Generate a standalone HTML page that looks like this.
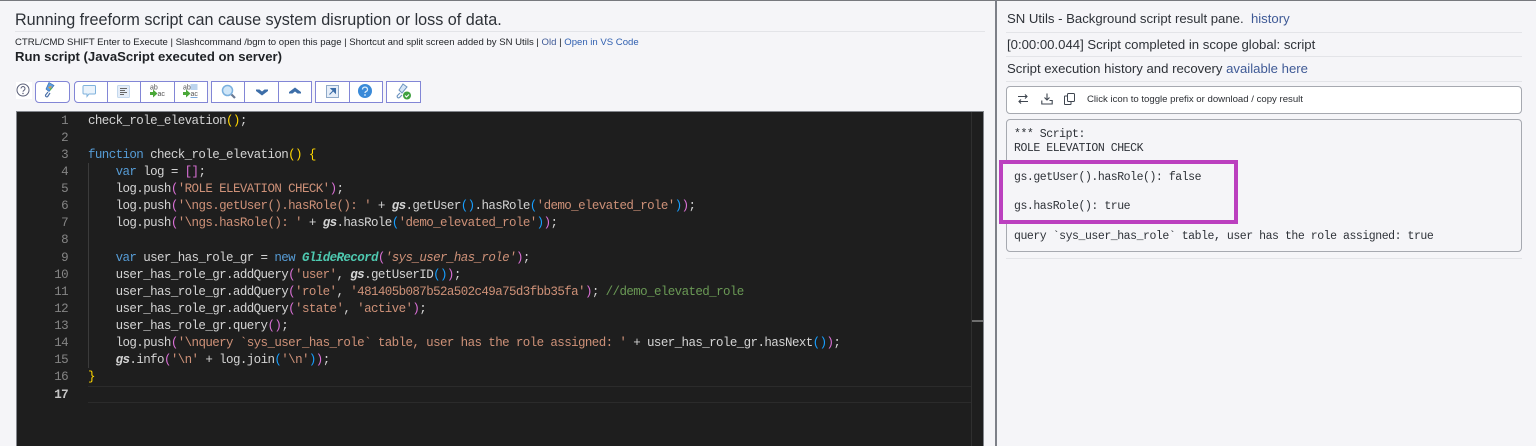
<!DOCTYPE html>
<html><head><meta charset="utf-8"><style>
html,body{margin:0;padding:0;width:1536px;height:446px;overflow:hidden;background:#f5f5f8;font-family:"Liberation Sans",sans-serif;color:#2e3238}
.a{position:absolute;white-space:pre}
a{color:#3f5a96;text-decoration:none}
.rule{position:absolute;height:1px;background:#e3e4e8}
.btn{position:absolute;top:81px;height:20px;background:#fff;border:1px solid #8286d6;box-sizing:content-box}
.d{position:absolute;top:81px;width:1px;height:22px;background:#8286d6}
svg{position:absolute;overflow:visible}
#ed{position:absolute;left:16px;top:111px;width:968px;height:335px;background:#1e1e1e;border-top:1px solid #83868c;border-left:1px solid #83868c;border-right:1px solid #83868c;box-sizing:border-box}
.l{position:absolute;left:88px;white-space:pre;font:12.5px/17px "Liberation Mono",monospace;letter-spacing:-.6px;color:#d4d4d4}
.n{position:absolute;left:30px;width:38px;text-align:right;font:12.5px/17px "Liberation Mono",monospace;letter-spacing:-.6px;color:#858585}
.k{color:#569cd6}.s{color:#ce9178}.c{color:#6a9955}.y{color:#ffd700}.p{color:#da70d6}.b{color:#179fff}
.g{font-style:italic;font-weight:bold}.t{color:#4ec9b0;font-style:italic;font-weight:bold}.si{color:#ce9178;font-style:italic}
.m{position:absolute;left:1014px;white-space:pre;font:11.5px/14px "Liberation Mono",monospace;letter-spacing:-.45px;color:#2e3238}
</style></head><body>
<div class="a" style="left:0;top:0;width:1536px;height:1px;background:#77797e"></div>
<div class="a" style="left:15px;top:10px;font-size:16.17px;line-height:20px;color:#2e3238">Running freeform script can cause system disruption or loss of data.</div>
<div class="rule" style="left:15px;top:31px;width:970px"></div>
<div class="a" style="left:15px;top:36px;font-size:9.57px;line-height:13px;color:#1f2226">CTRL/CMD SHIFT Enter to Execute | Slashcommand /bgm to open this page | Shortcut and split screen added by SN Utils | <a href="#">Old</a> | <a href="#" style="color:#2f5fb0">Open in VS Code</a></div>
<div class="a" style="left:15px;top:49px;font-size:13.14px;line-height:15px;font-weight:bold;color:#1f2226">Run script (JavaScript executed on server)</div>

<div class="a" style="left:16px;top:82px;width:16px;height:17px;background:#fff"></div>
<svg style="left:16px;top:83px" width="14" height="14" viewBox="0 0 14 14"><circle cx="7" cy="7" r="6" fill="none" stroke="#5a5f78" stroke-width="1"/><path d="M5 5.5a2 2 0 1 1 3 1.8c-.7.4-1 .8-1 1.5" fill="none" stroke="#5a5f78"/><circle cx="7" cy="10.5" r=".7" fill="#5a5f78"/></svg>

<div class="btn" style="left:35px;width:33px;border-radius:4px"></div>
<svg style="left:44px;top:82px" width="12" height="16" viewBox="0 0 12 16"><path d="M5 .5l5 3-5 6-3-2.500z" fill="#5c9fe0" stroke="#3a6db0" stroke-width=".7"/><path d="M4 5l4-1-2 3z" fill="#e0a040"/><path d="M6 6.500l3-1-3 3.500z" fill="#58b058"/><path d="M4 10l-2 2.500a1.300 1.300 0 1 0 2 1.500l2-3" fill="none" stroke="#4a6fa8" stroke-width="1.200"/></svg>

<div class="btn" style="left:74px;width:132px;border-radius:4px 0 0 4px"></div>
<div class="d" style="left:107px"></div><div class="d" style="left:140px"></div><div class="d" style="left:174px"></div>
<svg style="left:83px;top:85px" width="14" height="14" viewBox="0 0 14 14"><path d="M1 .5h10.500a1 1 0 0 1 1 1v6.500a1 1 0 0 1-1 1h-5.500l-2 2.500v-2.500h-3a1 1 0 0 1-1-1v-6.500a1 1 0 0 1 1-1z" fill="#eaf3fb" stroke="#7fb2dc"/></svg>
<svg style="left:117px;top:85px" width="14" height="14" viewBox="0 0 14 14"><rect x=".5" y=".5" width="12" height="12" rx="1" fill="#e4edf8" stroke="#c4d8ee"/><path d="M3 3.500h7M3 5.500h5M3 7.500h7M3 9.500h4" stroke="#666" stroke-width="1"/></svg>
<svg style="left:149px;top:84px" width="18" height="16" viewBox="0 0 18 16"><path d="M1 8h3V5.500L8.500 9.500 4 13.500V11H1z" fill="#4aa838"/><text x="1" y="5.500" font-size="7" fill="#555" font-family="Liberation Sans">ab</text><text x="8.500" y="12" font-size="7" fill="#555" font-family="Liberation Sans">ac</text></svg>
<svg style="left:182px;top:84px" width="18" height="16" viewBox="0 0 18 16"><path d="M1 8h3V5.500L8.500 9.500 4 13.500V11H1z" fill="#4aa838"/><text x="1" y="5.500" font-size="7" fill="#555" font-family="Liberation Sans">ab</text><text x="8.500" y="12" font-size="7" fill="#555" font-family="Liberation Sans">ac</text><path d="M8.500 1h7M8.500 3h7M8.500 5h7M8.500 13.500h7" stroke="#7aa8dc"/></svg>

<div class="btn" style="left:211px;width:99px"></div>
<div class="d" style="left:244px"></div><div class="d" style="left:278px"></div>
<svg style="left:221px;top:84px" width="16" height="16" viewBox="0 0 16 16"><circle cx="6.500" cy="6.500" r="5" fill="#cfe6f8" stroke="#7ab0de" stroke-width="1.500"/><path d="M10.500 10.500l3.500 3.500" stroke="#6a7a94" stroke-width="2.200"/></svg>
<svg style="left:256px;top:88px" width="12" height="8" viewBox="0 0 12 8"><path d="M0 1.500h3.500L6 3.500l2.500-2H12v1.500L6 7.500 0 3z" fill="#3d6ea8"/></svg>
<svg style="left:289px;top:87px" width="12" height="8" viewBox="0 0 12 8"><path d="M0 6.500h3.500L6 4.500l2.500 2H12V5L6 .5 0 5z" fill="#3d6ea8"/></svg>

<div class="btn" style="left:315px;width:66px"></div>
<div class="d" style="left:349px"></div>
<svg style="left:326px;top:85px" width="13" height="13" viewBox="0 0 13 13"><rect x=".5" y=".5" width="12" height="12" fill="#e6eef8" stroke="#8fa9c8"/><path d="M3.500 9.500L8 5M5 3.500h4.500V8z" stroke="#3d6ea8" fill="#3d6ea8"/></svg>
<svg style="left:358px;top:84px" width="14" height="14" viewBox="0 0 14 14"><circle cx="7" cy="7" r="7" fill="#3a8ad8"/><path d="M4.500 5.500a2.500 2.300 0 1 1 3.600 2c-.8.400-1.100.8-1.100 1.500" fill="none" stroke="#d8ecfb" stroke-width="1.300"/><circle cx="7" cy="11" r=".9" fill="#d8ecfb"/></svg>

<div class="btn" style="left:386px;width:33px"></div>
<svg style="left:396px;top:83px" width="16" height="18" viewBox="0 0 16 18"><path d="M7 1l4 3-5 6-3-3z" fill="#d6e6f6" stroke="#6d94c0"/><path d="M4 10l-2 2a1.500 1.500 0 1 0 2 2l2-2" fill="none" stroke="#6d94c0" stroke-width="1.200"/><circle cx="11" cy="12.500" r="4" fill="#3fa03f"/><path d="M9 12.500l1.500 1.500 2.500-2.500" fill="none" stroke="#fff" stroke-width="1.100"/></svg>

<div id="ed"></div>
<div class="a" style="left:971px;top:112px;width:1px;height:334px;background:#2f2f2f"></div>
<div class="a" style="left:972px;top:320px;width:11px;height:2px;background:#6e6e6e"></div>
<div class="a" style="left:88px;top:386px;width:883px;height:15px;border-top:1px solid #2b2b2b;border-bottom:1px solid #2b2b2b"></div>
<div class="a" style="left:88px;top:163px;width:1px;height:205px;background:#3b3b3b"></div>

<div class="n" style="top:113px">1</div><div class="n" style="top:130px">2</div><div class="n" style="top:147px">3</div><div class="n" style="top:164px">4</div><div class="n" style="top:181px">5</div><div class="n" style="top:198px">6</div><div class="n" style="top:215px">7</div><div class="n" style="top:232px">8</div><div class="n" style="top:250px">9</div><div class="n" style="top:267px">10</div><div class="n" style="top:284px">11</div><div class="n" style="top:301px">12</div><div class="n" style="top:318px">13</div><div class="n" style="top:335px">14</div><div class="n" style="top:352px">15</div><div class="n" style="top:369px">16</div><div class="n" style="top:387px;color:#c6c6c6;font-weight:bold">17</div>

<div class="l" style="top:113px">check_role_elevation<span class="y">()</span>;</div>
<div class="l" style="top:147px"><span class="k">function</span> check_role_elevation<span class="y">()</span> <span class="y">{</span></div>
<div class="l" style="top:164px">    <span class="k">var</span> log = <span class="p">[]</span>;</div>
<div class="l" style="top:181px">    log.push<span class="p">(</span><span class="s">'ROLE ELEVATION CHECK'</span><span class="p">)</span>;</div>
<div class="l" style="top:198px">    log.push<span class="p">(</span><span class="s">'\ngs.getUser().hasRole(): '</span> + <span class="g">gs</span>.getUser<span class="b">()</span>.hasRole<span class="b">(</span><span class="s">'demo_elevated_role'</span><span class="b">)</span><span class="p">)</span>;</div>
<div class="l" style="top:215px">    log.push<span class="p">(</span><span class="s">'\ngs.hasRole(): '</span> + <span class="g">gs</span>.hasRole<span class="b">(</span><span class="s">'demo_elevated_role'</span><span class="b">)</span><span class="p">)</span>;</div>
<div class="l" style="top:250px">    <span class="k">var</span> user_has_role_gr = <span class="k">new</span> <span class="t">GlideRecord</span><span class="p">(</span><span class="si">'sys_user_has_role'</span><span class="p">)</span>;</div>
<div class="l" style="top:267px">    user_has_role_gr.addQuery<span class="p">(</span><span class="s">'user'</span>, <span class="g">gs</span>.getUserID<span class="b">()</span><span class="p">)</span>;</div>
<div class="l" style="top:284px">    user_has_role_gr.addQuery<span class="p">(</span><span class="s">'role'</span>, <span class="s">'481405b087b52a502c49a75d3fbb35fa'</span><span class="p">)</span>; <span class="c">//demo_elevated_role</span></div>
<div class="l" style="top:301px">    user_has_role_gr.addQuery<span class="p">(</span><span class="s">'state'</span>, <span class="s">'active'</span><span class="p">)</span>;</div>
<div class="l" style="top:318px">    user_has_role_gr.query<span class="p">()</span>;</div>
<div class="l" style="top:335px">    log.push<span class="p">(</span><span class="s">'\nquery `sys_user_has_role` table, user has the role assigned: '</span> + user_has_role_gr.hasNext<span class="b">()</span><span class="p">)</span>;</div>
<div class="l" style="top:352px">    <span class="g">gs</span>.info<span class="p">(</span><span class="s">'\n'</span> + log.join<span class="b">(</span><span class="s">'\n'</span><span class="b">)</span><span class="p">)</span>;</div>
<div class="l" style="top:369px"><span class="y">}</span></div>

<div class="a" style="left:995px;top:0;width:2px;height:446px;background:#7d8088"></div>

<div class="a" style="left:1007px;top:11px;font-size:13.15px;line-height:16px">SN Utils - Background script result pane.  <a href="#">history</a></div>
<div class="rule" style="left:1006px;top:32px;width:516px"></div>
<div class="a" style="left:1007px;top:37px;font-size:13.15px;line-height:16px">[0:00:00.044] Script completed in scope global: script</div>
<div class="rule" style="left:1006px;top:56px;width:516px"></div>
<div class="a" style="left:1007px;top:61px;font-size:13.15px;line-height:16px">Script execution history and recovery <a href="#">available here</a></div>
<div class="rule" style="left:1006px;top:81px;width:516px"></div>

<div class="a" style="left:1006px;top:86px;width:516px;height:28px;box-sizing:border-box;background:#fff;border:1px solid #a6a9b0;border-radius:4px"></div>
<svg style="left:1017px;top:93px" width="12" height="12" viewBox="0 0 12 12"><path d="M1 3.500h9M8 1.500l2 2-2 2M11 8.500H2M4 6.500l-2 2 2 2" fill="none" stroke="#3f4650" stroke-width="1.100"/></svg>
<svg style="left:1041px;top:93px" width="12" height="12" viewBox="0 0 12 12"><path d="M6 .5v6M3.500 4.500L6 7l2.500-2.500M.8 7.500v3.500h10.400V7.500H8.500" fill="none" stroke="#3f4650" stroke-width="1.100"/></svg>
<svg style="left:1064px;top:93px" width="11" height="12" viewBox="0 0 11 12"><rect x="3.500" y=".5" width="7" height="8" rx="1" fill="none" stroke="#3f4650"/><path d="M3 3H1a.5.5 0 0 0-.500.500V11a.5.5 0 0 0 .500.500h5.500a.5.5 0 0 0 .500-.500V9" fill="none" stroke="#3f4650"/></svg>
<div class="a" style="left:1087px;top:94px;font-size:9.6px;line-height:12px;color:#2b2e33">Click icon to toggle prefix or download / copy result</div>

<div class="a" style="left:1006px;top:119px;width:516px;height:133px;box-sizing:border-box;border:1px solid #a6a9b0;border-radius:4px"></div>
<div class="a" style="left:999px;top:160px;width:239px;height:64px;box-sizing:border-box;border:4px solid #bb40bf;background:#f5f5f8"></div>
<div class="m" style="top:128px">*** Script:</div>
<div class="m" style="top:142px">ROLE ELEVATION CHECK</div>
<div class="m" style="top:171px">gs.getUser().hasRole(): false</div>
<div class="m" style="top:200px">gs.hasRole(): true</div>
<div class="m" style="top:230px">query `sys_user_has_role` table, user has the role assigned: true</div>
<div class="rule" style="left:1006px;top:258px;width:516px"></div>
</body></html>
